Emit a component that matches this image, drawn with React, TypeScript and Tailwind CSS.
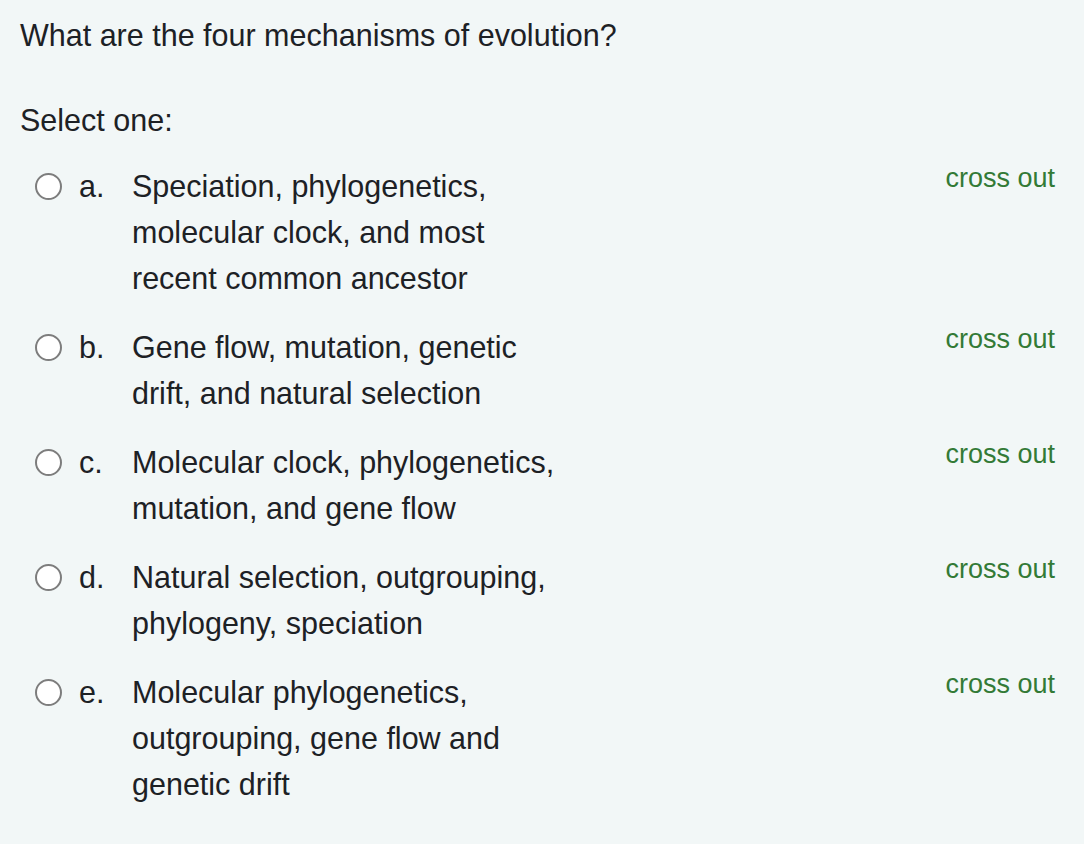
const options = [
  { letter: "a.", lines: ["Speciation, phylogenetics,", "molecular clock, and most", "recent common ancestor"] },
  { letter: "b.", lines: ["Gene flow, mutation, genetic", "drift, and natural selection"] },
  { letter: "c.", lines: ["Molecular clock, phylogenetics,", "mutation, and gene flow"] },
  { letter: "d.", lines: ["Natural selection, outgrouping,", "phylogeny, speciation"] },
  { letter: "e.", lines: ["Molecular phylogenetics,", "outgrouping, gene flow and", "genetic drift"] },
];

function Option({ letter, lines }: { letter: string; lines: string[] }) {
  return (
    <div className="flex items-start">
      <div className="ml-[15px] flex h-[46px] items-center">
        <span className="block h-[27px] w-[27px] rounded-full border-2 border-[#7d7d7d] bg-white" />
      </div>
      <span className="ml-[17px] w-[53px] shrink-0">{letter}</span>
      <div className="flex-1">
        {lines.map((l) => (
          <div key={l}>{l}</div>
        ))}
      </div>
      <button className="mr-[29px] mt-[2px] text-[27px] leading-none text-[#337a36]">
        cross out
      </button>
    </div>
  );
}

export default function App() {
  return (
    <div
      className="min-h-screen bg-[#f2f7f7] pl-[20px] pt-[12px] text-[30.5px] leading-[46px] text-[#1d2125]"
      style={{ fontFamily: '"Liberation Sans", Arial, Helvetica, sans-serif' }}
    >
      <p>What are the four mechanisms of evolution?</p>
      <p className="mt-[39px]">Select one:</p>
      <div className="mt-[20px] flex flex-col gap-[23px]">
        {options.map((o) => (
          <Option key={o.letter} letter={o.letter} lines={o.lines} />
        ))}
      </div>
    </div>
  );
}
